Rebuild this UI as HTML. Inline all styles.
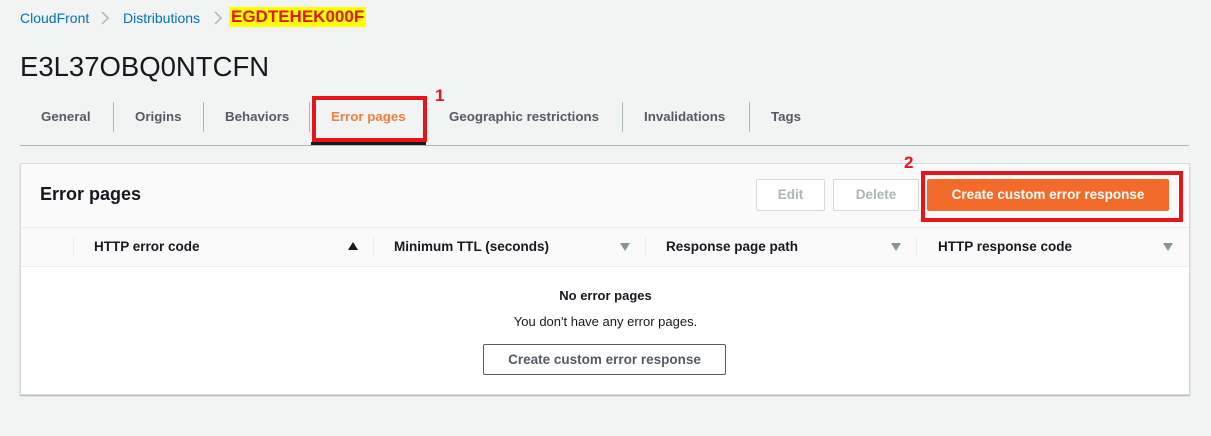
<!DOCTYPE html><html><head><style>
body{margin:0;width:1211px;height:436px;background:#f2f3f3;font-family:"Liberation Sans",sans-serif;position:relative;overflow:hidden}
.a{position:absolute;white-space:nowrap}
.b{font-weight:bold}
.tab{position:absolute;top:109px;font-size:13.3px;font-weight:bold;color:#545b64}
.sep{position:absolute;top:102px;width:1px;height:30px;background:#aab7b8}
.hd{position:absolute;top:239px;font-size:13.5px;font-weight:bold;color:#16191f}
.hs{position:absolute;top:237px;width:1px;height:20px;background:#eaeded}
.tri{position:absolute;top:243px;width:0;height:0;border-left:5px solid transparent;border-right:5px solid transparent}
</style></head><body>
<div class="a" style="left:20px;top:10px;font-size:14px;color:#0073bb">CloudFront</div>
<svg class="a" style="left:100px;top:10px" width="10" height="16"><path d="M2 2l6 6-6 6" fill="none" stroke="#aab7b8" stroke-width="1.5"/></svg>
<div class="a" style="left:123px;top:10px;font-size:14px;color:#0073bb">Distributions</div>
<svg class="a" style="left:213px;top:10px" width="10" height="16"><path d="M2 2l6 6-6 6" fill="none" stroke="#aab7b8" stroke-width="1.5"/></svg>
<div class="a b" style="left:229px;top:7px;font-size:17px;color:#e8141a;background:#ffff00;padding:0 2px">EGDTEHEK000F</div>
<div class="a" style="left:20px;top:51px;font-size:27.5px;color:#16191f">E3L37OBQ0NTCFN</div>
<div class="tab" style="left:41px">General</div><div class="sep" style="left:113px"></div>
<div class="tab" style="left:135px">Origins</div><div class="sep" style="left:203px"></div>
<div class="tab" style="left:225px">Behaviors</div><div class="sep" style="left:309px"></div>
<div class="tab" style="left:331px;color:#f47f3d">Error pages</div>
<div class="a" style="left:311px;top:142px;width:115px;height:3px;background:#16191f"></div>
<div class="a" style="left:312px;top:96px;width:107px;height:38px;border:4px solid #e8141a"></div>
<div class="a b" style="left:435px;top:86px;font-size:17px;color:#e8141a">1</div>
<div class="tab" style="left:449px">Geographic restrictions</div><div class="sep" style="left:622px"></div>
<div class="tab" style="left:644px">Invalidations</div><div class="sep" style="left:749px"></div>
<div class="tab" style="left:771px">Tags</div>
<div class="a" style="left:20px;top:145px;width:1169px;height:1px;background:#aab7b8"></div>
<div class="a" style="left:20px;top:163px;width:1168px;height:230px;background:#fff;border:1px solid #d5dbdb;box-shadow:0 1px 1px rgba(0,28,36,.3)"></div>
<div class="a" style="left:21px;top:164px;width:1168px;height:63px;background:#fafafa;border-bottom:1px solid #eaeded"></div>
<div class="a b" style="left:40px;top:184px;font-size:18px;color:#16191f">Error pages</div>
<div class="a b" style="left:756px;top:179px;width:67px;height:30px;border:1px solid #d5dbdb;border-radius:2px;background:#fff;color:#aab7b8;font-size:13.5px;line-height:30px;text-align:center">Edit</div>
<div class="a b" style="left:833px;top:179px;width:84px;height:30px;border:1px solid #d5dbdb;border-radius:2px;background:#fff;color:#aab7b8;font-size:13.5px;line-height:30px;text-align:center">Delete</div>
<div class="a" style="left:921px;top:171px;width:254px;height:43px;border:4px solid #e8141a"></div>
<div class="a b" style="left:927px;top:179px;width:242px;height:32px;background:#f26b2a;border-radius:2px;color:#fff;font-size:13.5px;line-height:32px;text-align:center">Create custom error response</div>
<div class="a b" style="left:904px;top:153px;font-size:17px;color:#e8141a">2</div>
<div class="a" style="left:21px;top:228px;width:1168px;height:38px;background:#fafafa;border-bottom:1px solid #eaeded"></div>
<div class="hs" style="left:73px"></div>
<div class="hd" style="left:94px">HTTP error code</div>
<div class="tri" style="left:348px;border-bottom:8px solid #16191f;top:242px"></div>
<div class="hs" style="left:373px"></div>
<div class="hd" style="left:394px">Minimum TTL (seconds)</div>
<div class="tri" style="left:620px;border-top:8px solid #879596"></div>
<div class="hs" style="left:645px"></div>
<div class="hd" style="left:666px">Response page path</div>
<div class="tri" style="left:891px;border-top:8px solid #879596"></div>
<div class="hs" style="left:916px"></div>
<div class="hd" style="left:938px">HTTP response code</div>
<div class="tri" style="left:1163px;border-top:8px solid #879596"></div>
<div class="a b" style="left:0;width:1211px;top:288px;text-align:center;font-size:13px;color:#16191f">No error pages</div>
<div class="a" style="left:0;width:1211px;top:314px;text-align:center;font-size:13px;color:#16191f">You don't have any error pages.</div>
<div class="a b" style="left:483px;top:344px;width:241px;height:29px;border:1px solid #545b64;border-radius:2px;background:#fff;color:#545b64;font-size:13.5px;line-height:29px;text-align:center">Create custom error response</div>
</body></html>
